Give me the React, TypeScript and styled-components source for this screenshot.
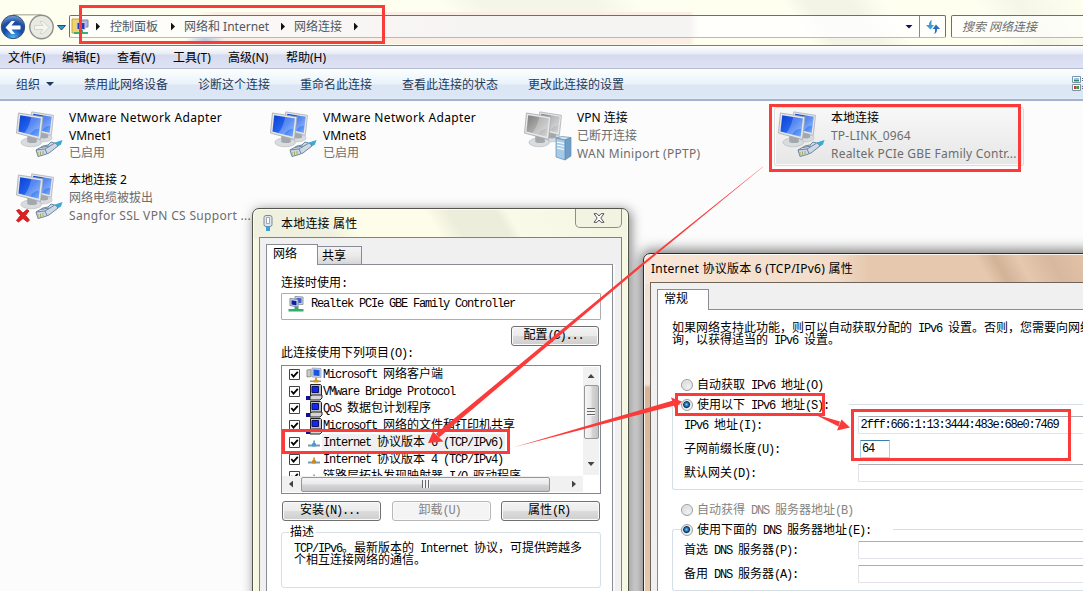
import React from "react";
import styled, { createGlobalStyle, css } from "styled-components";

const UI = `"Noto Sans", "Noto Sans CJK SC", sans-serif`;
const SIM = `"Liberation Mono", "Noto Sans CJK SC", monospace`;
const RED = "#fb3a3a";

const Global = createGlobalStyle`
  * { box-sizing: border-box; }
  body { margin: 0; overflow: hidden; font-family: ${UI}; font-size: 12px; color: #000; }
`;

const Desktop = styled.main`
  position: relative;
  width: 1083px;
  height: 591px;
  overflow: hidden;
  background: #fcfcfc;
  white-space: nowrap;
`;

/* ---------- explorer window ---------- */

const Glass = styled.header`
  display: flex;
  align-items: flex-start;
  height: 46px;
  padding-top: 15px;
  border-bottom: 1px solid #7b7b78;
  background:
    radial-gradient(ellipse 20px 6px at 205px 40px, #b5c4dc, transparent),
    linear-gradient(90deg, transparent 195px, #fbeee4 215px, #fbeee4 690px, transparent 695px) 0 12px / 100% 32px no-repeat,
    linear-gradient(55deg, #fffff0 0 42%, #f5f6e6 46% 56%, #fffff0 60% 73%, #f3f4e6 75% 79%, #fffff0 82% 90%, #f5f6e8 94%, #fffff0);
`;

const NavButtons = styled.div`
  flex: none;
  width: 69px;
  height: 26px;
  margin-top: -1px;
`;

const AddressBar = styled.div`
  display: flex;
  flex: none;
  align-items: center;
  width: 877px;
  height: 23px;
  border: 1px solid #6e6e6c;
  border-bottom-color: #b9b9b5;
  border-radius: 2px;
  background: linear-gradient(90deg, rgba(255, 255, 255, 0.75), rgba(246, 245, 245, 0.9) 45%, rgba(246, 245, 245, 0.9) 620px, rgba(255, 255, 255, 0.8) 630px);
  color: #505860;
`;

const Crumb = styled.span<{ $w: number; $ls?: number }>`
  width: ${(p) => p.$w}px;
  letter-spacing: ${(p) => p.$ls ?? 0}px;
  line-height: 20px;
`;

const Caret = styled.span<{ $gap: number }>`
  width: 4px;
  height: 8px;
  margin-right: ${(p) => p.$gap}px;
  background: #111;
  clip-path: polygon(0 0, 100% 50%, 0 100%);
`;

const Drop = styled.i<{ $c?: string }>`
  width: 8px;
  height: 4px;
  background: ${(p) => p.$c ?? "#111150"};
  clip-path: polygon(0 0, 100% 0, 50% 100%);
`;

const Refresh = styled.div`
  display: flex;
  align-items: center;
  justify-content: center;
  width: 26px;
  height: 21px;
  margin-left: 6px;
  border-left: 1px solid #888;
`;

const Search = styled.div`
  flex: none;
  width: 160px;
  height: 23px;
  margin-left: 5px;
  padding-left: 10px;
  border: 1px solid #6e6e6c;
  border-bottom-color: #b9b9b5;
  border-radius: 2px;
  background: rgba(255, 255, 255, 0.65);
  color: #707070;
  font-style: italic;
  line-height: 21px;
`;

const MenuBar = styled.nav`
  display: flex;
  height: 23px;
  padding-left: 8px;
  border-bottom: 1px solid #b3bad2;
  background: linear-gradient(#fff, #e6ebf5 8px, #d5daef 9px, #dfe3f4);
  line-height: 23px;
`;

const MenuItem = styled.span<{ $w: number }>`
  width: ${(p) => p.$w}px;
`;

const ToolBar = styled.nav`
  display: flex;
  align-items: center;
  height: 32px;
  padding-left: 16px;
  border-bottom: 2px solid #a3b3cf;
  background: linear-gradient(#fdfeff, #e9f3fb 15px, #dce6f4 16px, #dce7f5 28px, #e4eef8);
  color: #1e395b;
`;

const Tool = styled.span<{ $w: number }>`
  display: flex;
  flex: none;
  align-items: center;
  gap: 6px;
  width: ${(p) => p.$w}px;
`;

const ViewSwitch = styled.svg`
  flex: none;
  margin-left: auto;
  margin-right: -5px;
`;

const Grid = styled.section`
  display: grid;
  grid-template-columns: repeat(4, 254px);
  grid-auto-rows: 62px;
  padding: 6px 0 0 11px;
`;

const Connection = styled.article<{ $selected?: boolean }>`
  display: flex;
  width: 252px;
  padding-left: 5px;
  ${(p) =>
    p.$selected &&
    css`
      width: 250px;
      height: 59px;
      margin-left: 1px;
      padding-left: 4px;
      border-radius: 3px;
      box-shadow: inset 0 0 0 1px #dcdcdc, inset 0 0 0 2px #fafafa;
      background: linear-gradient(#f8f8f8, #e6e6e6);
    `}
`;

const ConnectionText = styled.div`
  margin-left: 5px;
  padding-top: 2px;
  width: 186px;
`;

const Line = styled.div<{ $name?: boolean; $ls?: number }>`
  height: ${(p) => (p.$name ? 17.5 : 18)}px;
  line-height: 18px;
  color: ${(p) => (p.$name ? "#000" : "#6d6d6d")};
  letter-spacing: ${(p) => p.$ls ?? 0}px;
`;

/* ---------- dialogs ---------- */

const Dialog = styled.section<{ $x: number; $y: number; $w: number; $warm?: boolean }>`
  position: absolute;
  left: ${(p) => p.$x}px;
  top: ${(p) => p.$y}px;
  width: ${(p) => p.$w}px;
  height: 460px;
  padding: 0 6px;
  border: 1px solid ${(p) => (p.$warm ? "#2e2a28" : "#555550")};
  border-radius: 7px 7px 0 0;
  box-shadow: inset 0 0 0 1px rgba(255, 255, 255, 0.8), ${(p) => (p.$warm ? "0 0 14px 2px rgba(0,0,0,.6)" : "2px 2px 12px rgba(0,0,0,.5)")};
  background: ${(p) =>
    p.$warm
      ? "linear-gradient(90deg, rgba(255,240,228,.75), rgba(255,240,228,.5) 190px, transparent 225px) 0 0 / 100% 30px no-repeat, linear-gradient(60deg, #e5c8ae 0 76%, #d3b297 80%, #e5c8ae 85%, #d8b89e 92%, #e2c3a8) 0 0 / 440px 30px no-repeat, linear-gradient(#f0e0d2, #f2e3d7 130px, #d9b494 134px, #ecd2bc)"
      : "linear-gradient(60deg, #eff0dd 0 20%, #fdfde9 28% 48%, #ecedda 54% 66%, #f9fae8 69%, #f3f4e0) 0 0 / 100% 30px no-repeat, #f7f8e2"};
`;

const TitleBar = styled.div<{ $ls: number }>`
  display: flex;
  height: 28px;
  padding-left: 1px;
  letter-spacing: ${(p) => p.$ls}px;
  line-height: 29px;
`;

const TitleIcon = styled.span`
  width: 21px;
  padding: 6px 0 0 2px;
  line-height: 0;
`;

const CloseButton = styled.div`
  display: flex;
  align-items: center;
  justify-content: center;
  width: 47px;
  height: 19px;
  margin-left: auto;
  border: 1px solid #8e8e84;
  border-top: 0;
  border-radius: 0 0 5px 5px;
  background: #f2f3e0;
`;

const Client = styled.div<{ $warm?: boolean }>`
  height: 440px;
  padding: 6px 0 0 6px;
  border: 1px solid ${(p) => (p.$warm ? "#6f645c" : "#82827c")};
  background: #f0f0f0;
  font-family: ${SIM};
`;

const Tabs = styled.div`
  display: flex;
  align-items: flex-end;
  height: 20px;
`;

const Tab = styled.div<{ $w: number; $active?: boolean }>`
  width: ${(p) => p.$w}px;
  height: ${(p) => (p.$active ? 21 : 18)}px;
  margin-bottom: ${(p) => (p.$active ? -1 : 0)}px;
  padding-left: ${(p) => (p.$active ? 6 : 4)}px;
  border: 1px solid #898c95;
  border-bottom: 0;
  ${(p) => !p.$active && "border-left: 0;"}
  background: ${(p) => (p.$active ? "#fff" : "linear-gradient(#f3f3f3, #ebebeb 50%, #d6d6d6)")};
  line-height: ${(p) => (p.$active ? 20 : 20)}px;
`;

const Panel = styled.div<{ $w: number }>`
  width: ${(p) => p.$w}px;
  height: 400px;
  padding: 12px 10px 0 14px;
  border: 1px solid #898c95;
  background: #fff;
  box-shadow: 2px 0 #fafafa;
`;

const Latin = styled.span`
  font-size: 12px;
  letter-spacing: -1.2px;
  white-space: pre;
`;

/* Latin runs take half the advance of a Chinese glyph. */
const Sim = ({ children }: { children: string }) => (
  <span>
    {children.split(/([\x20-\x7e]+)/).map((run, i) => (i % 2 ? <Latin key={i}>{run}</Latin> : run))}
  </span>
);

const Label = styled.div<{ $mt?: number }>`
  height: 12px;
  margin-top: ${(p) => p.$mt ?? 0}px;
  line-height: 14px;
`;

const Adapter = styled.div`
  display: flex;
  gap: 7px;
  width: 320px;
  height: 27px;
  margin: 4px 0 6px;
  padding: 2px 0 0 6px;
  border: 1px solid #adadad;
  border-radius: 1px;
  line-height: 17px;
`;

const Button = styled.button<{ $w: number }>`
  width: ${(p) => p.$w}px;
  height: 20px;
  padding: 1px 3px 0 0;
  border: 1px solid #707070;
  border-radius: 3px;
  background: linear-gradient(#f3f3f3, #ebebeb 48%, #dcdcdc 52%, #cecece);
  box-shadow: inset 0 0 0 1px #fafafa;
  color: #000;
  font: 12px/17px ${SIM};
  &:disabled {
    border-color: #b4b8bb;
    background: #f4f4f4;
    color: #838383;
  }
`;

const ButtonRow = styled.div<{ $end?: boolean }>`
  display: flex;
  gap: ${(p) => (p.$end ? 0 : 10.5)}px;
  justify-content: ${(p) => (p.$end ? "flex-end" : "flex-start")};
  padding: ${(p) => (p.$end ? "0 3px 0 0" : "0 0 0 1px")};
`;

const ListBox = styled.div`
  display: grid;
  grid-template-columns: 301px 16px;
  grid-template-rows: 110px 16px;
  width: 320px;
  height: 129px;
  margin: 6px 0 7px;
  border: 1px solid #828790;
`;

const Items = styled.div`
  height: 110px;
  overflow: hidden;
`;

const Item = styled.div`
  display: flex;
  align-items: center;
  height: 17px;
  padding-left: 7px;
  line-height: 15px;
`;

const ItemIcon = styled.span`
  width: 17px;
  height: 16px;
  margin-left: 6px;
  line-height: 0;
`;

const ItemText = styled.span<{ $selected?: boolean }>`
  padding: 2px 2px 0 1px;
  margin-left: -1px;
  background: ${(p) => (p.$selected ? "#f0f0f0" : "none")};
`;

const ScrollTrack = styled.div<{ $v?: boolean }>`
  display: flex;
  flex-direction: ${(p) => (p.$v ? "column" : "row")};
  align-items: center;
  gap: ${(p) => (p.$v ? 7 : 8)}px;
  padding: ${(p) => (p.$v ? "7px 0 0" : "0 0 0 7px")};
  ${(p) => p.$v && "margin-top: 1px; height: 108px;"}
  background: #f1f1f1;
`;

const Thumb = styled.div<{ $v?: boolean; $len: number }>`
  display: flex;
  flex: none;
  align-items: center;
  justify-content: center;
  width: ${(p) => (p.$v ? 15 : p.$len)}px;
  height: ${(p) => (p.$v ? p.$len : 15)}px;
  border: 1px solid #979797;
  border-radius: 2px;
  background: linear-gradient(${(p) => (p.$v ? "90deg" : "180deg")}, #f5f5f5, #e9e9eb 48%, #d6d6d8 52%, #c4c4c6);
`;

const Spacer = styled.span<{ $size?: number }>`
  flex: ${(p) => (p.$size ? `0 0 ${p.$size}px` : "1")};
`;

const Grip = styled.i<{ $v?: boolean }>`
  width: 8px;
  height: 8px;
  background: repeating-linear-gradient(${(p) => (p.$v ? "180deg" : "90deg")}, #666 0 1px, #f4f4f4 1px 3px);
`;

const Arrow = styled.i<{ $dir: "up" | "down" | "left" | "right" }>`
  width: ${(p) => (p.$dir === "up" || p.$dir === "down" ? 7 : 4)}px;
  height: ${(p) => (p.$dir === "up" || p.$dir === "down" ? 4 : 7)}px;
  background: #444;
  clip-path: ${(p) =>
    ({
      up: "polygon(50% 0, 100% 100%, 0 100%)",
      down: "polygon(0 0, 100% 0, 50% 100%)",
      left: "polygon(0 50%, 100% 0, 100% 100%)",
      right: "polygon(0 0, 100% 50%, 0 100%)",
    })[p.$dir]};
`;

const Description = styled.div`
  width: 320px;
  height: 56px;
  margin-top: 11px;
  padding-left: 7px;
  border: 1px solid #d5dfe5;
  border-radius: 3px;
`;

const Legend = styled.div`
  width: 27px;
  height: 12px;
  margin-top: -7px;
  padding-left: 1px;
  background: #fff;
  line-height: 14px;
`;

const Body = styled.div`
  padding: 5px 0 0 5px;
  line-height: 12px;
`;

const Radio = styled.div<{ $w?: number; $disabled?: boolean }>`
  display: flex;
  align-items: center;
  gap: 4px;
  width: ${(p) => (p.$w ? `${p.$w}px` : "auto")};
  height: 14px;
  line-height: 14px;
  background: #fff;
  color: ${(p) => (p.$disabled ? "#838383" : "#000")};

  > span {
    padding-top: 1px;
  }
`;

const Dot = styled.i<{ $on?: boolean }>`
  width: 12px;
  height: 12px;
  border: 1px solid #9a9c9e;
  border-radius: 50%;
  box-shadow: inset 0 0 0 1px #eee;
  background: ${(p) =>
    p.$on
      ? "radial-gradient(circle at 45% 45%, #6fd0f5 0, #1f6aa8 2px, #0f2f57 3px, #eef3f6 4.2px)"
      : "radial-gradient(circle at 65% 70%, #f2f2f2, #cfd1d3)"};
`;

const PlainRadio = styled.div<{ $mt: number; $mb: number }>`
  margin: ${(p) => p.$mt}px 0 ${(p) => p.$mb}px 9px;
`;

const Group = styled.div<{ $h: number }>`
  height: ${(p) => p.$h}px;
  padding-left: 8px;
  border: 1px solid #d5dfe5;
  border-right: 0;
  border-radius: 3px;
  margin-right: -20px;
`;

const GroupHead = styled.div`
  margin-top: -7px;
  margin-bottom: 4px;
`;

const Field = styled.div`
  display: flex;
  height: 18px;
  margin-bottom: 6px;
  padding-left: 3px;
  line-height: 20px;
`;

const FieldLabel = styled.span`
  width: 176px;
`;

const Input = styled.div<{ $w?: number; $focus?: boolean }>`
  width: ${(p) => p.$w ?? 260}px;
  height: 18px;
  padding-left: 1px;
  border: 1px solid ${(p) => (p.$focus ? "#a9cfec" : "#e2e3ea")};
  border-top-color: ${(p) => (p.$focus ? "#3d7bad" : "#abadb3")};
  border-radius: 1px;
  line-height: 17px;
`;

const Annotations = styled.svg`
  position: absolute;
  left: 0;
  top: 0;
`;

/* ---------- drawings ---------- */

const Monitor = ({ gray }: { gray?: boolean }) => (
  <g>
    <ellipse cx="15" cy="31" rx="10.500" ry="4.500" fill="#d9dcde" stroke="#b3b6b9" strokeWidth=".6" />
    <path d="M11 24h9l1 6.500q-5 2.500-10 0z" fill="#a4a8ac" />
    <path d="M2 1L27 5L24.500 28L0 21.500z" fill="#e4e6e8" stroke="#a3a6aa" strokeWidth=".8" />
    <path d="M3.800 3.200L24.800 6.700L22.600 25.200L2 19.800z" fill={gray ? "url(#screenGray)" : "url(#screenBlue)"} />
    <path d="M15 5L24.800 6.700L23.500 17Q17 17 14 23L8 21.500Q13 15 15 5z" fill="#fff" opacity=".25" />
  </g>
);

const ConnectionIcon = ({ kind, unplugged }: { kind: "lan" | "vpn"; unplugged?: boolean }) => (
  <svg width="48" height="56" viewBox="0 0 48 56">
    <defs>
      <linearGradient id="screenBlue" x1="0" x2="1" y2="1">
        <stop offset="0" stopColor="#0a3fd0" />
        <stop offset=".5" stopColor="#2363ee" />
        <stop offset="1" stopColor="#7fb4fb" />
      </linearGradient>
      <linearGradient id="screenGray" x1="0" x2="1" y2="1">
        <stop offset="0" stopColor="#7c7c7c" />
        <stop offset="1" stopColor="#d8d8d8" />
      </linearGradient>
    </defs>
    <g transform="translate(14 4) scale(.87)">
      <Monitor gray={kind === "vpn"} />
    </g>
    <g transform="translate(.5 5) scale(.98)">
      <Monitor gray={kind === "vpn"} />
    </g>
    {kind === "lan" ? (
      <g strokeLinejoin="round">
        <path d="M36 36.500L46.500 33L45 37.500L39 41z" fill="#3aa9d6" />
        <path d="M20 43L27 39L32 38L35 35L40 36.500L42 39L33 46L29 47.500L22 49.500z" fill="#ccd8e4" stroke="#6e86a0" />
        <path d="M20 43L29 42L31 46.500M29 42L38 36.500M25 40.500L33 39" fill="none" stroke="#6e86a0" />
        <path d="M22 45v3.500M24.500 44.500v3.500M27 44v3.500" stroke="#a8a860" />
      </g>
    ) : (
      <g stroke="#5f8db5" strokeWidth=".7">
        <path d="M32 31L38 29.500L47 30.500L41 33z" fill="#d6e8f5" />
        <path d="M41 33L47 30.500V49L41 53z" fill="#6f9fc8" />
        <path d="M32 31L41 33V53L32 50z" fill="#a7cbe6" />
        <path d="M33 35l7 1.500M33 38l7 1.500M33 41l7 1.500" stroke="#fff" strokeWidth="1.200" />
      </g>
    )}
    {unplugged && (
      <path d="M.5 41.500L3 40.500L7 44L11 40.500L13 42L9.500 46.500L13.500 51L11.500 53L7 49.500L2.500 53L.5 51.500L4.500 46.500z" fill="#e02020" stroke="#b01515" strokeWidth=".8" />
    )}
  </svg>
);

const NetIcon = () => (
  <svg width="16" height="16" viewBox="0 0 16 16">
    <path d="M7 .5l8 .500v7.500l-8-.500z" fill="#d3d9e2" stroke="#8d97a4" />
    <path d="M8.500 2l5 .300v4.700l-5-.300z" fill="#3a5ad8" />
    <path d="M2 2.500l8 1v7.500l-8-1.500z" fill="#dde2e8" stroke="#7d8794" />
    <path d="M3.500 4.200l5 .700v4.500l-5-1z" fill="#0c1fa8" />
    <path d="M6.500 11h4v2h5v2.500H.5V13h6z" fill="#2fae6e" />
  </svg>
);

const ServiceIcon = () => (
  <svg width="17" height="17" viewBox="0 0 17 17">
    <path d="M4.500 .5h10l1 1v10h-11z" fill="#c0c0c0" stroke="#222" />
    <path d="M6 2.500h6.500v6H6z" fill="#1028f0" stroke="#101060" />
    <path d="M4 12L6 11h10v3l-2 2H4z" fill="#d5d5d5" stroke="#222" />
    <path d="M0 12h4v4H0z" fill="#101090" />
  </svg>
);

const ClientIcon = () => (
  <svg width="17" height="17" viewBox="0 0 17 17">
    <path d="M1 3l4-.500v7L1 10z" fill="#c9cdc4" stroke="#8e958c" />
    <path d="M6 1l9 .500v9L6 10z" fill="#c3d5f2" stroke="#8a9cb9" strokeWidth=".7" />
    <path d="M7.500 2.500l6 .500v6l-6-.500z" fill="#1c55dc" />
    <path d="M4 13.500h11v1.500H4z" fill="#8f8f88" />
    <path d="M9 10.500h2v2l1.500 1v2h-5v-2L9 12.500z" fill="#d69a2a" />
  </svg>
);

const ProtocolIcon = ({ color }: { color: string }) => (
  <svg width="16" height="16" viewBox="0 0 16 16">
    <path d="M2 9.500h12v2H2z" fill="#7c98ae" />
    <path d="M6 11.500V8.500L7.300 8V5.500h1.600V8L10 8.500v3z" fill={color} />
  </svg>
);

const Check = () => (
  <svg width="11" height="11" viewBox="0 0 11 11">
    <path d="M.5 .5h10v10H.5z" fill="#fff" stroke="#444" />
    <path d="M2.300 5L4.500 7.600L8.800 2.800" fill="none" stroke="#000" strokeWidth="1.800" />
  </svg>
);

const Navigation = () => (
  <svg width="69" height="27" viewBox="0 0 69 27">
    <defs>
      <radialGradient id="back" cx=".5" cy=".95" r=".95">
        <stop offset="0" stopColor="#4db7f5" />
        <stop offset=".45" stopColor="#164cab" />
        <stop offset=".7" stopColor="#1c4f9e" />
        <stop offset="1" stopColor="#7ea5dc" />
      </radialGradient>
    </defs>
    <path d="M13 .5H41" stroke="#bdbdb0" strokeWidth="2" />
    <circle cx="13" cy="13" r="11.700" fill="url(#back)" stroke="#33507c" />
    <path d="M5.500 13.500L11.500 7H15L11.500 11.500H20.500V15.500H11.500L15 20H11.500z" fill="#fff" />
    <circle cx="41.500" cy="13" r="11.700" fill="#e9eae2" stroke="#8d8f8c" strokeWidth="1.400" />
    <path d="M49 13.500L43 7.500H40L43 11.500H34.500V15.500H43L40 19.500H43z" fill="#f6f6f0" stroke="#c9c9c2" strokeWidth=".7" />
    <path d="M57.500 11.500h8l-4 4.500z" fill="#2b9fc8" stroke="#1c4d78" />
  </svg>
);

/* ---------- data ---------- */

const menus: [string, number][] = [["文件(F)", 54], ["编辑(E)", 55], ["查看(V)", 56], ["工具(T)", 55], ["高级(N)", 58], ["帮助(H)", 60]];
const tools: [string, number][] = [["禁用此网络设备", 114], ["诊断这个连接", 102], ["重命名此连接", 102], ["查看此连接的状态", 126], ["更改此连接的设置", 100]];

const items: { text: string; icon: React.ReactNode; selected?: boolean }[] = [
  { text: "Microsoft 网络客户端", icon: <ClientIcon /> },
  { text: "VMware Bridge Protocol", icon: <ServiceIcon /> },
  { text: "QoS 数据包计划程序", icon: <ServiceIcon /> },
  { text: "Microsoft 网络的文件和打印机共享", icon: <ServiceIcon /> },
  { text: "Internet 协议版本 6 (TCP/IPv6)", icon: <ProtocolIcon color="#4a9ad0" />, selected: true },
  { text: "Internet 协议版本 4 (TCP/IPv4)", icon: <ProtocolIcon color="#c98a20" /> },
  { text: "链路层拓扑发现映射器 I/O 驱动程序", icon: <ProtocolIcon color="#7c98ae" /> },
];

export default function App() {
  return (
    <>
      <Global />
      <Desktop>
        <Glass>
          <NavButtons><Navigation /></NavButtons>
          <AddressBar>
            <svg width="26" height="20" viewBox="0 0 26 20">
              <path d="M2 2h7l1 1v13H2z" fill="#f0d46a" stroke="#c9a63c" />
              <path d="M10 3h8v7h-8z" fill="#aab4dc" stroke="#8089a5" />
              <path d="M7 5.500h8v7H7z" fill="#2838b8" stroke="#c8cede" />
              <path d="M10 13h3v2h5v2H4v-2h6z" fill="#35b46c" />
            </svg>
            <Caret $gap={10} />
            <Crumb $w={61}>控制面板</Crumb>
            <Caret $gap={9} />
            <Crumb $w={97} $ls={0}>网络和 Internet</Crumb>
            <Caret $gap={9} />
            <Crumb $w={60}>网络连接</Crumb>
            <Caret $gap={0} />
            <Spacer />
            <Drop />
            <Refresh>
              <svg width="16" height="16" viewBox="0 0 16 16">
                <path d="M7 1Q4 2 4 5.500V6H1l4.500 4.500L9 6H6.500Q6 3 7 1z" fill="#3d9bd8" />
                <path d="M9 15q3-1 3-4.500V10h3l-4-4.500L7.500 10H10q.5 3-1 5z" fill="#2a6cc0" />
              </svg>
            </Refresh>
          </AddressBar>
          <Search>搜索 网络连接</Search>
        </Glass>
        <MenuBar>
          {menus.map(([t, w]) => <MenuItem key={t} $w={w}>{t}</MenuItem>)}
        </MenuBar>
        <ToolBar>
          <Tool $w={68}>组织<Drop $c="#1e395b" /></Tool>
          {tools.map(([t, w]) => <Tool key={t} $w={w}>{t}</Tool>)}
          <ViewSwitch width="16" height="18" viewBox="0 0 16 18">
            <path d="M.5 1.500h8v6h-8zM.5 9.500h8v6h-8z" fill="#fff" stroke="#7f93a8" />
            <path d="M2 5h5v1.500H2z" fill="#2d8a66" />
            <path d="M2 3h5v2H2z" fill="#8fc4ea" />
            <path d="M2 11h2.500v3H2z" fill="#c63a2a" />
            <path d="M4.500 11H7v3H4.500z" fill="#3b9a45" />
            <path d="M10 3.500h3M10 5.500h3M10 11.500h3M10 13.500h3" stroke="#667" />
          </ViewSwitch>
        </ToolBar>
        <Grid>
          <Connection>
            <ConnectionIcon kind="lan" />
            <ConnectionText>
              <Line $name $ls={0.35}>VMware Network Adapter</Line>
              <Line $name>VMnet1</Line>
              <Line>已启用</Line>
            </ConnectionText>
          </Connection>
          <Connection>
            <ConnectionIcon kind="lan" />
            <ConnectionText>
              <Line $name $ls={0.35}>VMware Network Adapter</Line>
              <Line $name>VMnet8</Line>
              <Line>已启用</Line>
            </ConnectionText>
          </Connection>
          <Connection>
            <ConnectionIcon kind="vpn" />
            <ConnectionText>
              <Line $name>VPN 连接</Line>
              <Line>已断开连接</Line>
              <Line $ls={0.3}>WAN Miniport (PPTP)</Line>
            </ConnectionText>
          </Connection>
          <Connection $selected>
            <ConnectionIcon kind="lan" />
            <ConnectionText>
              <Line $name>本地连接</Line>
              <Line $ls={0.2}>TP-LINK_0964</Line>
              <Line $ls={0.22}>Realtek PCIe GBE Family Contr...</Line>
            </ConnectionText>
          </Connection>
          <Connection>
            <ConnectionIcon kind="lan" unplugged />
            <ConnectionText>
              <Line $name>本地连接 2</Line>
              <Line>网络电缆被拔出</Line>
              <Line $ls={0.33}>Sangfor SSL VPN CS Support ...</Line>
            </ConnectionText>
          </Connection>
        </Grid>

        <Dialog $x={252} $y={208} $w={377}>
          <TitleBar $ls={0.2}>
            <TitleIcon>
              <svg width="12" height="17" viewBox="0 0 12 17">
                <rect x="2" y=".5" width="8" height="11" rx="2" fill="#dfe5ea" stroke="#7d8b99" />
                <path d="M4.500 2.500h3v6h-3z" fill="#fff" stroke="#8797a5" strokeWidth=".8" />
                <path d="M4 11.500h4V16H4z" fill="#3aa4d8" />
              </svg>
            </TitleIcon>
            本地连接 属性
            <CloseButton>
              <svg width="12" height="10" viewBox="0 0 12 10">
                <path d="M1 .7h3L6 3l2-2.300h3L7.800 5L11 9.300H8L6 7L4 9.300H1L4.200 5z" fill="#fff" stroke="#55565e" />
              </svg>
            </CloseButton>
          </TitleBar>
          <Client>
            <Tabs>
              <Tab $w={52} $active>网络</Tab>
              <Tab $w={44}>共享</Tab>
            </Tabs>
            <Panel $w={347}>
              <Label><Sim>连接时使用:</Sim></Label>
              <Adapter>
                <NetIcon />
                <Sim>Realtek PCIe GBE Family Controller</Sim>
              </Adapter>
              <ButtonRow $end>
                <Button $w={88}><Sim>配置(C)...</Sim></Button>
              </ButtonRow>
              <Label $mt={1}><Sim>此连接使用下列项目(O):</Sim></Label>
              <ListBox>
                <Items>
                  {items.map((it) => (
                    <Item key={it.text}>
                      <Check />
                      <ItemIcon>{it.icon}</ItemIcon>
                      <ItemText $selected={it.selected}><Sim>{it.text}</Sim></ItemText>
                    </Item>
                  ))}
                </Items>
                <ScrollTrack $v>
                  <Arrow $dir="up" />
                  <Thumb $v $len={54}><Grip $v /></Thumb>
                  <Spacer $size={9} />
                  <Arrow $dir="down" />
                </ScrollTrack>
                <ScrollTrack>
                  <Arrow $dir="left" />
                  <Thumb $len={249}><Grip /></Thumb>
                  <Spacer $size={6} />
                  <Arrow $dir="right" />
                </ScrollTrack>
              </ListBox>
              <ButtonRow>
                <Button $w={99}><Sim>安装(N)...</Sim></Button>
                <Button $w={99} disabled><Sim>卸载(U)</Sim></Button>
                <Button $w={99}><Sim>属性(R)</Sim></Button>
              </ButtonRow>
              <Description>
                <Legend>描述</Legend>
                <Body>
                  <div><Sim>TCP/IPv6。最新版本的 Internet 协议，可提供跨越多</Sim></div>
                  <div>个相互连接网络的通信。</div>
                </Body>
              </Description>
            </Panel>
          </Client>
        </Dialog>

        <Dialog $x={643} $y={253} $w={470} $warm>
          <TitleBar $ls={0.25}>Internet 协议版本 6 (TCP/IPv6) 属性</TitleBar>
          <Client $warm>
            <Tabs>
              <Tab $w={52} $active>常规</Tab>
            </Tabs>
            <Panel $w={450}>
              <Label><Sim>如果网络支持此功能，则可以自动获取分配的 IPv6 设置。否则，您需要向网络</Sim></Label>
              <Label><Sim>询，以获得适当的 IPv6 设置。</Sim></Label>
              <PlainRadio $mt={32} $mb={12}>
                <Radio><Dot /><Sim>自动获取 IPv6 地址(O)</Sim></Radio>
              </PlainRadio>
              <Group $h={86}>
                <GroupHead><Radio $w={168}><Dot $on /><Sim>使用以下 IPv6 地址(S):</Sim></Radio></GroupHead>
                <Field><FieldLabel><Sim>IPv6 地址(I):</Sim></FieldLabel><Input><Sim>2fff:666:1:13:3444:483e:68e0:7469</Sim></Input></Field>
                <Field><FieldLabel><Sim>子网前缀长度(U):</Sim></FieldLabel><Input $w={30} $focus><Sim>64</Sim></Input></Field>
                <Field><FieldLabel><Sim>默认网关(D):</Sim></FieldLabel><Input /></Field>
              </Group>
              <PlainRadio $mt={13} $mb={12}>
                <Radio $disabled><Dot /><Sim>自动获得 DNS 服务器地址(B)</Sim></Radio>
              </PlainRadio>
              <Group $h={62}>
                <GroupHead><Radio $w={212}><Dot $on /><Sim>使用下面的 DNS 服务器地址(E):</Sim></Radio></GroupHead>
                <Field><FieldLabel><Sim>首选 DNS 服务器(P):</Sim></FieldLabel><Input /></Field>
                <Field><FieldLabel><Sim>备用 DNS 服务器(A):</Sim></FieldLabel><Input /></Field>
              </Group>
            </Panel>
          </Client>
        </Dialog>

        <Annotations width="1083" height="591" viewBox="0 0 1083 591">
          <g fill="none" stroke={RED} strokeWidth="3">
            <rect x="80.500" y="6.500" width="303" height="36" />
            <rect x="770.500" y="105.500" width="249" height="65" />
            <rect x="283.500" y="430.500" width="225" height="22" />
            <rect x="676.500" y="394.500" width="147" height="20" />
            <rect x="852.500" y="410.500" width="217" height="49" />
          </g>
          <g fill={RED}>
            <path d="M770 161L640 265L436 433.500L439 437.500L641 267z" />
            <path d="M428 443L433 431.500L443.500 441.500z" />
            <path d="M513 447.500L673 400.500L674.500 405.500z" />
            <path d="M682 401.500L671 397.500L675 408.500z" />
            <path d="M814 414L840 421.500L838.500 426.500z" />
            <path d="M850 427.500L841.500 419.500L837 430.500z" />
          </g>
        </Annotations>
      </Desktop>
    </>
  );
}
